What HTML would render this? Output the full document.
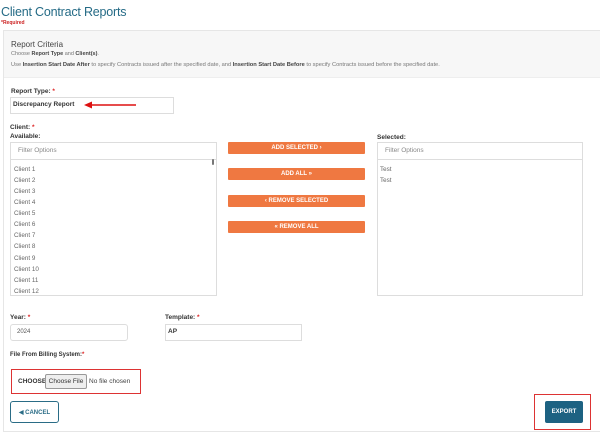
<!DOCTYPE html>
<html><head><meta charset="utf-8"><style>
*{margin:0;padding:0;box-sizing:border-box}
body{width:600px;height:433px;background:#fff;font-family:"Liberation Sans",sans-serif;position:relative;overflow:hidden;color:#333}
.a{position:absolute;white-space:nowrap}
.lbl{font-size:6.5px;font-weight:bold;color:#333}
.r{color:#d22}
.box{position:absolute;border:1px solid #ddd;background:#fff}
.btn{position:absolute;left:228px;width:137px;height:12px;background:#ef7841;color:#fff;font-size:6px;font-weight:bold;text-align:center;line-height:12px;border-radius:1px}
.it{font-size:6.3px;color:#666;position:absolute;left:14px}
.c{display:flex;align-items:center;justify-content:center}
</style></head><body>
<div class="a" style="left:1px;top:5px;font-size:12.5px;letter-spacing:-0.2px;color:#256b86">Client Contract Reports</div>
<div class="a" style="left:1px;top:20px;font-size:5px;color:#c22;font-weight:bold">*Required</div>
<div style="position:absolute;left:3px;top:30px;width:600px;height:402px;border:1px solid #e6e6e6;background:#fff"></div>
<div style="position:absolute;left:4px;top:31px;width:600px;height:47px;background:#f7f7f7;border-bottom:1px solid #eee"></div>
<div class="a" style="left:11px;top:40px;font-size:8px;color:#444">Report Criteria</div>
<div class="a" style="left:11px;top:51px;font-size:5.5px;color:#777">Choose <b style="color:#444">Report Type</b> and <b style="color:#444">Client(s)</b>.</div>
<div class="a" style="left:11px;top:62px;font-size:5.7px;color:#777">Use <b style="color:#444">Insertion Start Date After</b> to specify Contracts issued after the specified date, and <b style="color:#444">Insertion Start Date Before</b> to specify Contracts issued before the specified date.</div>
<div class="a lbl" style="left:11px;top:88px">Report Type: <span class="r">*</span></div>
<div class="box" style="left:10px;top:97px;width:164px;height:17px"></div>
<div class="a" style="left:13px;top:101px;font-size:6.5px;font-weight:bold;color:#333">Discrepancy Report</div>
<svg class="a" style="left:84px;top:101px" width="54" height="8"><line x1="6" y1="4" x2="52" y2="4" stroke="#d11" stroke-width="1.6"/><polygon points="0,4 8,0.5 8,7.5" fill="#d11"/></svg>
<div class="a lbl" style="left:10px;top:124px">Client: <span class="r">*</span></div>
<div class="a lbl" style="left:10px;top:133px">Available:</div>
<div class="box" style="left:10px;top:142px;width:207px;height:18px"></div>
<div class="a" style="left:18px;top:147px;font-size:6.5px;color:#888">Filter Options</div>
<div class="box" style="left:10px;top:159px;width:207px;height:137px"></div>
<div style="position:absolute;left:212px;top:159px;width:2px;height:6px;background:#777;border-radius:1px"></div>
<div class="it" style="top:166px">Client 1</div><div class="it" style="top:177px">Client 2</div><div class="it" style="top:188px">Client 3</div><div class="it" style="top:199px">Client 4</div><div class="it" style="top:210px">Client 5</div><div class="it" style="top:221px">Client 6</div><div class="it" style="top:232px">Client 7</div><div class="it" style="top:243px">Client 8</div><div class="it" style="top:255px">Client 9</div><div class="it" style="top:266px">Client 10</div><div class="it" style="top:277px">Client 11</div><div class="it" style="top:288px">Client 12</div>
<div class="btn" style="top:142px">ADD SELECTED ›</div>
<div class="btn" style="top:168px">ADD ALL »</div>
<div class="btn" style="top:195px">‹ REMOVE SELECTED</div>
<div class="btn" style="top:221px">« REMOVE ALL</div>
<div class="a lbl" style="left:377px;top:134px">Selected:</div>
<div class="box" style="left:377px;top:142px;width:206px;height:18px"></div>
<div class="a" style="left:385px;top:147px;font-size:6.5px;color:#888">Filter Options</div>
<div class="box" style="left:377px;top:159px;width:206px;height:137px"></div>
<div class="it" style="left:380px;top:166px">Test</div><div class="it" style="left:380px;top:177px">Test</div>
<div class="a lbl" style="left:10px;top:314px">Year: <span class="r">*</span></div>
<div class="box" style="left:10px;top:324px;width:118px;height:17px;border-radius:3px"></div>
<div class="a" style="left:17px;top:329px;font-size:6px;color:#555">2024</div>
<div class="a lbl" style="left:165px;top:314px">Template: <span class="r">*</span></div>
<div class="box" style="left:165px;top:324px;width:137px;height:17px"></div>
<div class="a" style="left:168px;top:328px;font-size:6.5px;color:#333;font-weight:bold">AP</div>
<div class="a lbl" style="left:10px;top:352px;font-size:6px">File From Billing System:<span class="r">*</span></div>
<div style="position:absolute;left:11px;top:369px;width:130px;height:25px;border:1px solid #d33"></div>
<div class="a" style="left:18px;top:378px;font-size:6.5px;font-weight:bold;color:#333">CHOOSE</div>
<div class="c" style="position:absolute;left:45px;top:374px;width:42px;height:15px;background:#eee;border:1px solid #999;border-radius:2px;font-size:6.5px">Choose File</div>
<div class="a" style="left:89px;top:378px;font-size:6.5px;color:#444">No file chosen</div>
<div class="c" style="position:absolute;left:10px;top:401px;width:49px;height:22px;border:1.5px solid #2a6c86;border-radius:3px;color:#2a6c86;font-size:6px;font-weight:bold">◀ CANCEL</div>
<div style="position:absolute;left:534px;top:394px;width:57px;height:36px;border:1px solid #d33"></div>
<div class="c" style="position:absolute;left:545px;top:401px;width:38px;height:22px;background:#1d6282;border-radius:2px;color:#fff;font-size:6px;font-weight:bold">EXPORT</div>
</body></html>
